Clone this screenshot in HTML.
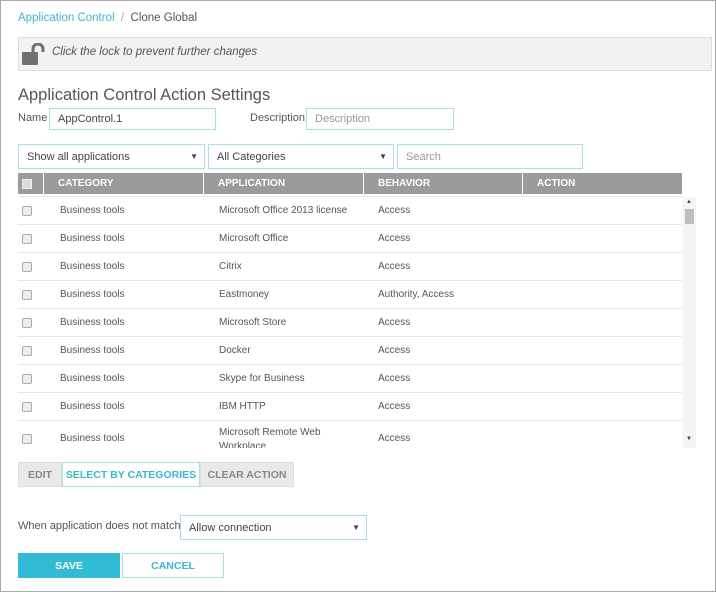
<!DOCTYPE html>
<html><head><meta charset="utf-8"><style>
*{box-sizing:border-box;margin:0;padding:0}
body{width:716px;height:592px;overflow:hidden;font-family:"Liberation Sans",sans-serif;font-size:10px;color:#555;background:#fff;position:relative}
.frame{position:absolute;left:0;top:0;width:716px;height:592px;border:1px solid #aaa}
.a{position:absolute;white-space:nowrap}
.inp{position:absolute;border:1px solid #a8dfe9;background:#fff;font-family:"Liberation Sans",sans-serif;font-size:11px;color:#444;padding-left:8px;display:flex;align-items:center}
.arrow{position:absolute;right:6px;font-size:8px;color:#444}
.hd{position:absolute;top:173px;height:21px;background:#9b9b9b;color:#fff;font-weight:bold;font-size:10px;display:flex;align-items:center;padding-left:14px;border-right:1px solid #fff}
.row{position:absolute;left:0;width:664px;height:28px;border-bottom:1px solid #e6e6e6}
.row span{position:absolute;top:8px;font-size:10px;color:#555;white-space:nowrap}
.cb{position:absolute;left:4px;top:9px;width:10px;height:10px;border:1px solid #aaa;border-radius:2px;background:#eee}
.btn{position:absolute;top:462px;height:25px;display:flex;align-items:center;justify-content:center;font-weight:bold;font-size:10.5px;white-space:nowrap}
</style></head><body>
<div class="frame"></div>
<div class="a" style="left:18px;top:12px;font-size:11.5px"><span style="color:#3cb6d0">Application Control</span><span style="color:#aaa">&nbsp;&nbsp;/&nbsp;&nbsp;</span><span style="color:#555">Clone Global</span></div>
<div class="a" style="left:18px;top:37px;width:694px;height:34px;background:#f2f2f2;border:1px solid #ddd"></div>
<svg class="a" style="left:22px;top:43px" width="26" height="22"><rect x="0" y="9" width="16" height="13" rx="1" fill="#707070"/><path d="M11 10 V6 a5 5 0 0 1 10 0 V9" stroke="#707070" stroke-width="3" fill="none"/></svg>
<div class="a" style="left:52px;top:46px;font-style:italic;font-size:11.5px;color:#555">Click the lock to prevent further changes</div>
<div class="a" style="left:18px;top:86px;font-size:16.5px;color:#555">Application Control Action Settings</div>
<div class="a" style="left:18px;top:112px;font-size:11px">Name</div>
<div class="inp" style="left:49px;top:108px;width:167px;height:22px">AppControl.1</div>
<div class="a" style="left:250px;top:112px;font-size:11px">Description</div>
<div class="inp" style="left:306px;top:108px;width:148px;height:22px;color:#999">Description</div>
<div class="inp" style="left:18px;top:144px;width:187px;height:25px">Show all applications<span class="arrow">▼</span></div>
<div class="inp" style="left:208px;top:144px;width:186px;height:25px">All Categories<span class="arrow">▼</span></div>
<div class="inp" style="left:397px;top:144px;width:186px;height:25px;color:#999">Search</div>
<div class="hd" style="left:18px;width:26px;padding-left:4px"><div style="width:10px;height:10px;background:#ddd;border:1px solid #eee"></div></div>
<div class="hd" style="left:44px;width:160px">CATEGORY</div>
<div class="hd" style="left:204px;width:160px">APPLICATION</div>
<div class="hd" style="left:364px;width:159px">BEHAVIOR</div>
<div class="hd" style="left:523px;width:159px;border-right:none">ACTION</div>
<div class="a" style="left:18px;top:194px;width:664px;height:3px;border-bottom:1px solid #e6e6e6"></div>
<div class="a" style="left:18px;top:197px;width:664px;height:251px;overflow:hidden">
<div class="row" style="top:0"><div class="cb"></div><span style="left:42px">Business tools</span><span style="left:201px">Microsoft Office 2013 license</span><span style="left:360px">Access</span></div>
<div class="row" style="top:28px"><div class="cb"></div><span style="left:42px">Business tools</span><span style="left:201px">Microsoft Office</span><span style="left:360px">Access</span></div>
<div class="row" style="top:56px"><div class="cb"></div><span style="left:42px">Business tools</span><span style="left:201px">Citrix</span><span style="left:360px">Access</span></div>
<div class="row" style="top:84px"><div class="cb"></div><span style="left:42px">Business tools</span><span style="left:201px">Eastmoney</span><span style="left:360px">Authority, Access</span></div>
<div class="row" style="top:112px"><div class="cb"></div><span style="left:42px">Business tools</span><span style="left:201px">Microsoft Store</span><span style="left:360px">Access</span></div>
<div class="row" style="top:140px"><div class="cb"></div><span style="left:42px">Business tools</span><span style="left:201px">Docker</span><span style="left:360px">Access</span></div>
<div class="row" style="top:168px"><div class="cb"></div><span style="left:42px">Business tools</span><span style="left:201px">Skype for Business</span><span style="left:360px">Access</span></div>
<div class="row" style="top:196px"><div class="cb"></div><span style="left:42px">Business tools</span><span style="left:201px">IBM HTTP</span><span style="left:360px">Access</span></div>
<div class="row" style="top:224px;height:40px"><div class="cb" style="top:13px"></div><span style="left:42px;top:12px">Business tools</span><span style="left:201px;top:5px;line-height:14px">Microsoft Remote Web<br>Workplace</span><span style="left:360px;top:12px">Access</span></div>
</div>
<div class="a" style="left:683px;top:197px;width:13px;height:251px;background:#f4f4f4"></div>
<div class="a" style="left:686px;top:199px;font-size:6px;color:#444">▲</div>
<div class="a" style="left:685px;top:209px;width:9px;height:15px;background:#bdbdbd"></div>
<div class="a" style="left:686px;top:436px;font-size:6px;color:#444">▼</div>
<div class="btn" style="left:18px;width:44px;background:#e9e9e9;border:1px solid #ddd;color:#888">EDIT</div>
<div class="btn" style="left:62px;width:138px;background:#fff;border:1px solid #a8dfe9;color:#3cb6d0">SELECT BY CATEGORIES</div>
<div class="btn" style="left:200px;width:94px;background:#e9e9e9;border:1px solid #ddd;color:#888">CLEAR ACTION</div>
<div class="a" style="left:18px;top:520px;font-size:11px">When application does not match</div>
<div class="inp" style="left:180px;top:515px;width:187px;height:25px">Allow connection<span class="arrow">▼</span></div>
<div class="btn" style="top:553px;left:18px;width:102px;background:#31bbd5;color:#fff">SAVE</div>
<div class="btn" style="top:553px;left:122px;width:102px;border:1px solid #a8dfe9;color:#3cb6d0">CANCEL</div>
</body></html>
